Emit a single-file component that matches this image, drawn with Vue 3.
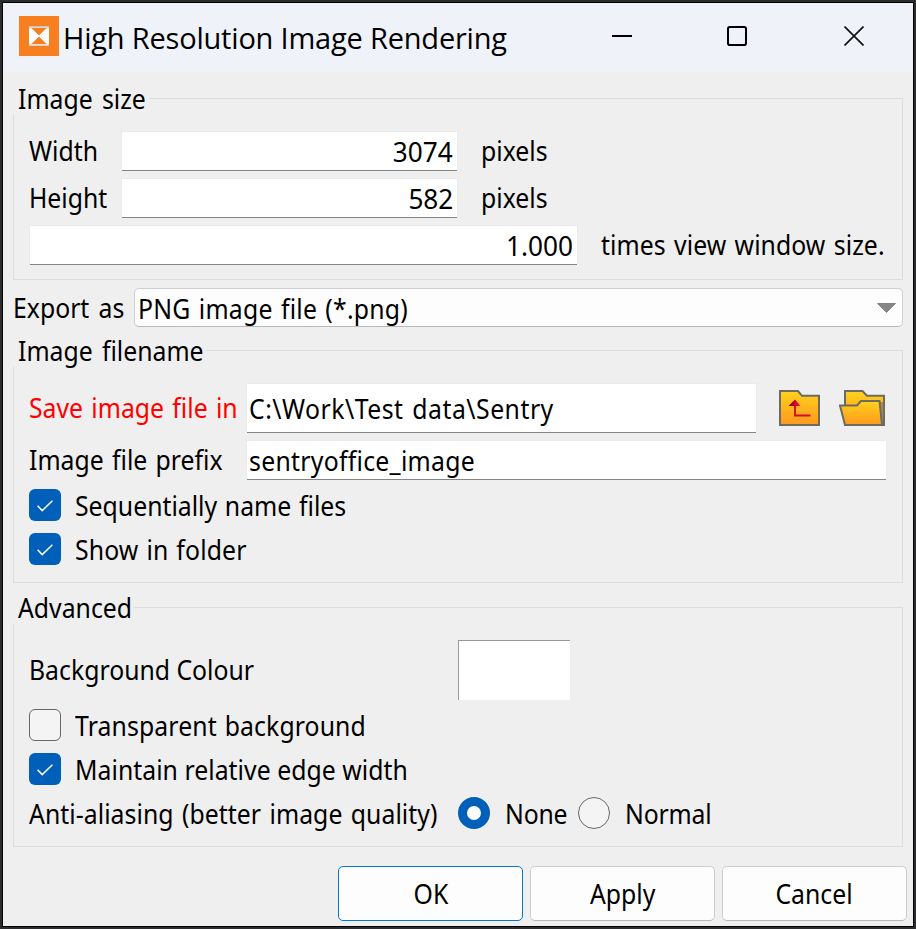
<script setup>
import { ref } from 'vue'

const width = ref('3074')
const height = ref('582')
const scale = ref('1.000')
const folder = ref('C:\\Work\\Test data\\Sentry')
const prefix = ref('sentryoffice_image')
const sequential = ref(true)
const showInFolder = ref(true)
const transparent = ref(false)
const edgeWidth = ref(true)
const antialias = ref('None')
</script>

<template>
  <div class="window">
    <header class="titlebar">
      <svg class="logo" width="40" height="40" viewBox="0 0 40 40">
        <defs>
          <linearGradient id="logoShade" x1="0" y1="0" x2="0" y2="1">
            <stop offset="0" stop-color="#c9b8ac" />
            <stop offset="0.17" stop-color="#fff" />
            <stop offset="0.83" stop-color="#fff" />
            <stop offset="1" stop-color="#d8c8bc" />
          </linearGradient>
        </defs>
        <rect width="40" height="40" fill="#f77f20" />
        <rect x="10" y="10" width="20" height="20" fill="url(#logoShade)" />
        <path d="M12.5 12H27.5L20 19.5ZM20 20.5L27.5 28H12.5Z" fill="#f77f20" />
      </svg>
      <h1 class="title">High Resolution Image Rendering</h1>
      <div class="controls">
        <svg width="20" height="20" viewBox="0 0 20 20"><path d="M0 10H20" stroke="#000" stroke-width="2" /></svg>
        <svg width="20" height="20" viewBox="0 0 20 20"><rect x="1" y="1" width="18" height="18" rx="1.8" fill="none" stroke="#000" stroke-width="2" /></svg>
        <svg width="20" height="20" viewBox="0 0 20 20"><path d="M0.5 0.5L19.5 19.5M19.5 0.5L0.5 19.5" stroke="#111" stroke-width="1.7" /></svg>
      </div>
    </header>

    <main class="body">
      <section class="group size">
        <h2 class="legend l-size"><span class="t ws3">Image size</span></h2>
        <div class="row"><label class="name"><span class="t">Width</span></label><div class="field w-dim"><span class="num">{{ width }}</span></div><span class="unit t">pixels</span></div>
        <div class="row"><label class="name"><span class="t">Height</span></label><div class="field w-dim"><span class="num">{{ height }}</span></div><span class="unit t">pixels</span></div>
        <div class="row"><div class="field w-scale"><span class="num">{{ scale }}</span></div><span class="unit t times">times view window size.</span></div>
      </section>

      <div class="export">
        <label><span class="t ws3">Export as</span></label>
        <div class="select">
          <span class="t format">PNG image file (*.png)</span>
          <svg width="19" height="10" viewBox="0 0 19 10"><path d="M0.5 0.5H18.5L9.5 9.5Z" fill="#868686" stroke="#747474" stroke-width=".8" /></svg>
        </div>
      </div>

      <section class="group file">
        <h2 class="legend l-file"><span class="t ws3">Image filename</span></h2>
        <div class="row tall">
          <label class="wide-name red"><span class="t ws2">Save image file in</span></label>
          <div class="field text w-path"><span class="t path">{{ folder }}</span></div>
          <div class="folders">
            <svg width="42" height="37" viewBox="0 0 42 37">
              <defs>
                <linearGradient id="fold" x1="0" y1="0" x2="0" y2="1"><stop offset="0" stop-color="#ffd21c" /><stop offset="1" stop-color="#ff981f" /></linearGradient>
                <linearGradient id="arrow" x1="0" y1="0" x2="1" y2="0"><stop offset="0" stop-color="#7a0010" /><stop offset=".6" stop-color="#d8002c" /><stop offset="1" stop-color="#e4203a" /></linearGradient>
              </defs>
              <path d="M1 1H19L23 5.8H40V35H1Z" fill="url(#fold)" stroke="#6b6b62" stroke-width="2" />
              <path d="M16 14V25.5H31.5" fill="none" stroke="#d60a30" stroke-width="1.9" />
              <path d="M9.5 16L16 9.5L21.5 16Z" fill="url(#arrow)" />
            </svg>
            <svg width="47" height="37" viewBox="0 0 47 37">
              <path d="M6 1H23.5L28 5.8H45V35H6Z" fill="url(#fold)" stroke="#6b6b62" stroke-width="2" />
              <path d="M41 12H44V35H42Z" fill="#b08a45" />
              <path d="M1 15.5H18L22 11H40.5L43 35H6Z" fill="url(#fold)" stroke="#6b6b62" stroke-width="2" />
            </svg>
          </div>
        </div>
        <div class="row prefix"><label class="wide-name"><span class="t ws2">Image file prefix</span></label><div class="field text w-prefix"><span class="t file-name">{{ prefix }}</span></div></div>
        <div class="check-row" @click="sequential = !sequential">
          <span class="box" :class="{ on: sequential }"><svg v-if="sequential" width="16" height="12" viewBox="0 0 16 12"><path d="M.6 5.8L5.2 10.6L15.4.8" fill="none" stroke="#fff" stroke-width="1.5" /></svg></span>
          <span class="t ws1">Sequentially name files</span>
        </div>
        <div class="check-row" @click="showInFolder = !showInFolder">
          <span class="box" :class="{ on: showInFolder }"><svg v-if="showInFolder" width="16" height="12" viewBox="0 0 16 12"><path d="M.6 5.8L5.2 10.6L15.4.8" fill="none" stroke="#fff" stroke-width="1.5" /></svg></span>
          <span class="t show">Show in folder</span>
        </div>
      </section>

      <section class="group advanced">
        <h2 class="legend l-adv"><span class="t">Advanced</span></h2>
        <div class="colour-row"><label><span class="t">Background Colour</span></label><div class="swatch"></div></div>
        <div class="check-row" @click="transparent = !transparent">
          <span class="box" :class="{ on: transparent }"><svg v-if="transparent" width="16" height="12" viewBox="0 0 16 12"><path d="M.6 5.8L5.2 10.6L15.4.8" fill="none" stroke="#fff" stroke-width="1.5" /></svg></span>
          <span class="t transparent">Transparent background</span>
        </div>
        <div class="check-row" @click="edgeWidth = !edgeWidth">
          <span class="box" :class="{ on: edgeWidth }"><svg v-if="edgeWidth" width="16" height="12" viewBox="0 0 16 12"><path d="M.6 5.8L5.2 10.6L15.4.8" fill="none" stroke="#fff" stroke-width="1.5" /></svg></span>
          <span class="t edge">Maintain relative edge width</span>
        </div>
        <div class="radio-row">
          <label class="aa"><span class="t smooth">Anti-aliasing (better image quality)</span></label>
          <div class="option" @click="antialias = 'None'"><span class="radio" :class="{ on: antialias === 'None' }"></span><span class="t tight">None</span></div>
          <div class="option" @click="antialias = 'Normal'"><span class="radio" :class="{ on: antialias === 'Normal' }"></span><span class="t tight">Normal</span></div>
        </div>
      </section>

      <footer class="buttons">
        <button class="btn primary"><span class="t mid">OK</span></button>
        <button class="btn"><span class="t mid">Apply</span></button>
        <button class="btn"><span class="t mid">Cancel</span></button>
      </footer>
    </main>
  </div>
</template>

<style>
body { background: #2d2d2f; }
#app { display: flow-root; }
</style>

<style scoped>
* { box-sizing: border-box; }
.window {
  width: 912px;
  height: 925px;
  margin: 2px;
  border: 1px solid #000;
  background: #efefef;
  color: #000;
  font: 27px/37px "Noto Sans", "Open Sans", sans-serif;
  white-space: nowrap;
  overflow: hidden;
}
/* Narrowed lettering for the dialog's labels */
.t { display: inline-block; transform: scaleX(.918); transform-origin: 0 50%; }
.num { display: inline-block; transform: scaleX(.97); transform-origin: 100% 50%; }
.mid { transform-origin: 50% 50%; }
.ws1 { word-spacing: 1.4px; }
.ws2 { word-spacing: 2px; }
.ws3 { word-spacing: 3px; }
.times { word-spacing: 2px; letter-spacing: .07px; }
.format { word-spacing: 1.6px; letter-spacing: .27px; }
.show { word-spacing: 1.5px; letter-spacing: .15px; }
.transparent { word-spacing: 1.5px; letter-spacing: .12px; }
.edge { letter-spacing: .04px; }
.smooth { word-spacing: 2px; letter-spacing: .06px; }
.tight { letter-spacing: -.2px; }
.path { letter-spacing: .54px; word-spacing: 2px; }
.file-name { letter-spacing: .3px; }
.titlebar { display: flex; height: 69px; padding: 13px 49px 0 16px; background: #eff3f9; }
.logo { flex: none; }
.title { margin: 2px 0 0 4px; font: 400 29px/40px "Open Sans", sans-serif; letter-spacing: -.2px; }
.controls { display: flex; justify-content: space-between; width: 252px; height: 20px; margin: 10px 0 0 auto; }
.controls svg:nth-child(2) { margin-right: 2px; }
.body { padding: 0 5px 0 10px; }
.group { width: 890px; border: 1px solid #dcdcdc; padding: 0 15px; }
.size { height: 182px; margin-top: 26px; }
.file { height: 233px; margin-top: 23px; }
.advanced { height: 240px; margin-top: 24px; }
.legend {
  height: 35px;
  margin: -19px 0 0 -16px;
  padding: 0 0 0 5px;
  background: #efefef;
  font: inherit;
}
.l-size { width: 136px; }
.l-file { width: 193px; }
.l-adv { width: 121px; }
.row { display: flex; align-items: center; height: 39px; }
.size .row { margin-bottom: 8px; }
.size .legend { margin-bottom: 17px; }
.name { flex: none; width: 93px; margin-top: -2px; }
.field {
  flex: none;
  display: flex;
  align-items: center;
  justify-content: flex-end;
  height: 39px;
  padding: 0 4px;
  background: #fff;
  border-bottom: 1px solid #858585;
  box-shadow: 0 0 0 1px #ebebeb;
  clip-path: inset(-1px -1px 0);
}
.text { justify-content: flex-start; padding: 1px 2px 0; }
.w-dim { width: 335px; }
.w-scale { width: 547px; margin-left: 1px; }
.unit { margin: -2px 0 0 24px; }
.export { display: flex; align-items: center; height: 39px; margin-top: 8px; }
.export label { flex: none; width: 121px; }
.select {
  display: flex;
  align-items: center;
  justify-content: space-between;
  width: 769px;
  height: 39px;
  padding: 1px 6px 0 3px;
  background: #fdfdfd;
  border: 1px solid #cfcfcf;
  border-bottom-color: #b8b8b8;
  border-radius: 5px;
}
.wide-name { flex: none; width: 218px; margin-top: -2px; }
.red { color: #f00; }
.file .legend { margin-bottom: 17px; }
.tall, .tall .field { height: 49px; }
.w-path { width: 509px; }
.w-prefix { width: 639px; }
.prefix { margin: 8px 0 9px; }
.folders { display: flex; gap: 18px; margin-left: 23px; }
.check-row { display: flex; align-items: center; gap: 14px; height: 32px; margin-bottom: 12px; }
.box {
  display: flex;
  align-items: center;
  justify-content: center;
  width: 32px;
  height: 32px;
  border: 1.5px solid #686868;
  border-radius: 6px;
  background: #f4f4f4;
}
.box.on { border: 0; background: #005fb8; }
.box svg { margin-top: 1px; }
.advanced .legend { margin-bottom: 16px; }
.colour-row { display: flex; align-items: center; height: 60px; margin-bottom: 9px; }
.colour-row label { width: 429px; margin-top: -2px; }
.swatch { width: 112px; height: 60px; background: #fff; border: solid #999; border-width: 1px 0 0 1px; }
.radio-row { display: flex; align-items: center; height: 32px; }
.aa { flex: none; width: 429px; }
.option { display: flex; align-items: center; gap: 15px; width: 120px; }
.radio { flex: none; width: 32px; height: 32px; border: 1.3px solid #686868; border-radius: 50%; background: #f4f4f4; }
.radio.on { border: 9px solid #005fb8; background: #fff; }
.buttons { display: flex; justify-content: flex-end; gap: 7px; margin-top: 19px; padding-right: 1px; }
.btn {
  width: 185px;
  height: 55px;
  padding: 0;
  background: #fdfdfd;
  border: 1px solid #cfcfcf;
  border-bottom-color: #b8b8b8;
  border-radius: 5px;
  color: inherit;
  font: inherit;
}
.primary { border-color: #0078d4; }
</style>
